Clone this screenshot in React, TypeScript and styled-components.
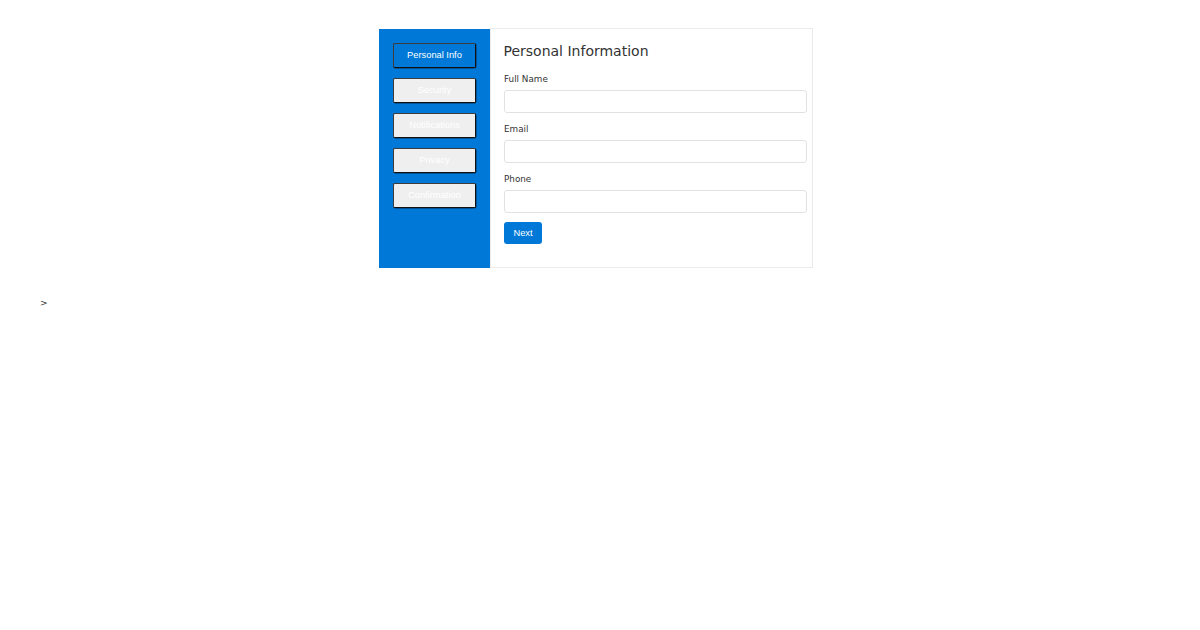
import React from "react";
import styled, { createGlobalStyle } from "styled-components";

const GlobalStyle = createGlobalStyle`
  html, body { margin: 0; padding: 0; background: #ffffff; }
  body { font-family: "DejaVu Sans", sans-serif; color: #333333; }
`;

const Page = styled.div`
  padding: 28px 16px 0 8px;
`;

const Layout = styled.div`
  display: flex;
  width: 434px;
  margin: 0 auto;
`;

const Sidebar = styled.nav`
  width: 111px;
  box-sizing: border-box;
  margin-top: 1px;
  padding: 14px;
  background: #0078d7;
  display: flex;
  flex-direction: column;
  gap: 10px;
`;

const StepButton = styled.button<{ $active?: boolean }>`
  width: 83px;
  height: 25px;
  box-sizing: border-box;
  padding: 0;
  border: 1px solid #3c3c3c;
  border-right-color: #111111;
  border-bottom-color: #111111;
  border-radius: 2px;
  box-shadow: 0.5px 0.5px 0 rgba(0, 0, 0, 0.6);
  background: ${(p) => (p.$active ? "#0078d7" : "#efefef")};
  color: #ffffff;
  font-family: "Liberation Sans", Arial, sans-serif;
  font-size: 9.3px;
  line-height: 11px;
  text-align: center;
  cursor: pointer;
`;

const Panel = styled.section`
  flex: 1;
  border: 1px solid #ebebeb;
  background: #ffffff;
  padding: 14px 14px 14px 13px;
`;

const Title = styled.h2`
  margin: 0 0 14px -0.5px;
  font-family: "DejaVu Sans", sans-serif;
  font-weight: normal;
  font-size: 14px;
  line-height: 16px;
  color: #333333;
`;

const Field = styled.div<{ $last?: boolean }>`
  margin-bottom: ${(p) => (p.$last ? "9px" : "10px")};
`;

const Label = styled.label`
  display: block;
  margin-bottom: 5px;
  font-family: "DejaVu Sans", sans-serif;
  font-size: 8.8px;
  line-height: 12px;
  color: #333333;
`;

const Input = styled.input`
  display: block;
  box-sizing: border-box;
  width: calc(100% + 9px);
  height: 23px;
  padding: 5px 4px;
  margin: 0;
  border: 1px solid #e2e2e2;
  border-radius: 3px;
  background: #ffffff;
  font-family: "DejaVu Sans", sans-serif;
  font-size: 9px;
  outline: none;
`;

const NextButton = styled.button`
  display: block;
  margin: 0 0 9px 0;
  width: 38px;
  height: 22px;
  padding: 0;
  border: none;
  border-radius: 3px;
  background: #0078d7;
  color: #ffffff;
  font-family: "Liberation Sans", Arial, sans-serif;
  font-size: 9.3px;
  line-height: 22px;
  text-align: center;
  cursor: pointer;
`;

const Stray = styled.div`
  margin-top: 29px;
  padding-left: 32px;
  font-family: "DejaVu Sans", sans-serif;
  font-size: 9px;
  line-height: 12px;
  color: #333333;
`;

const steps = ["Personal Info", "Security", "Notifications", "Privacy", "Confirmation"];
const fields = ["Full Name", "Email", "Phone"];

export default function App() {
  return (
    <>
      <GlobalStyle />
      <Page>
        <Layout>
          <Sidebar>
            {steps.map((s, i) => (
              <StepButton key={s} $active={i === 0}>
                {s}
              </StepButton>
            ))}
          </Sidebar>
          <Panel>
            <Title>Personal Information</Title>
            {fields.map((f, i) => (
              <Field key={f} $last={i === fields.length - 1}>
                <Label>{f}</Label>
                <Input type="text" />
              </Field>
            ))}
            <NextButton>Next</NextButton>
          </Panel>
        </Layout>
        <Stray>&gt;</Stray>
      </Page>
    </>
  );
}
